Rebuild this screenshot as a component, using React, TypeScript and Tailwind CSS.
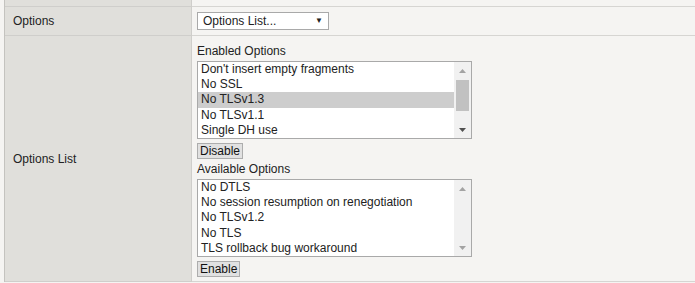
import React from 'react';

const enabledOptions = [
  "Don't insert empty fragments",
  'No SSL',
  'No TLSv1.3',
  'No TLSv1.1',
  'Single DH use',
];

const availableOptions = [
  'No DTLS',
  'No session resumption on renegotiation',
  'No TLSv1.2',
  'No TLS',
  'TLS rollback bug workaround',
];

const Arrow = ({ up, dark }: { up?: boolean; dark?: boolean }) => (
  <svg width="7" height="4" viewBox="0 0 7 4" className="block">
    <path d={up ? 'M0 4 L3.5 0 L7 4 Z' : 'M0 0 L3.5 4 L7 0 Z'} fill={dark ? '#505050' : '#a3a3a3'} />
  </svg>
);

const ListBox = ({ items, selected, thumb }: { items: string[]; selected?: number; thumb?: boolean }) => (
  <div className="flex w-[275px] h-[78px] border border-[#a9a9a9] bg-white">
    <div className="flex-1">
      {items.map((item, i) => (
        <div
          key={item}
          className={`h-[15.2px] leading-[15px] pl-[3px] whitespace-nowrap ${i === selected ? 'bg-[#cdcdcd]' : ''}`}
        >
          {item}
        </div>
      ))}
    </div>
    <div className="w-[17px] bg-[#f1f1f1] flex flex-col items-center">
      <div className="h-[17px] flex items-center justify-center">
        <Arrow up />
      </div>
      <div className="flex-1 w-full px-[2px]">
        {thumb && <div className="mt-px h-[31px] bg-[#c1c1c1]" />}
      </div>
      <div className="h-[17px] flex items-center justify-center">
        <Arrow dark={thumb} />
      </div>
    </div>
  </div>
);

const Button = ({ label }: { label: string }) => (
  <button className="block h-[16px] leading-[14px] px-[2px] bg-[#e1e1e1] border border-[#adadad] text-[12px] text-[#111]">
    {label}
  </button>
);

export default function App() {
  return (
    <div className="w-[695px] h-[283px] bg-[#f5f4f2] text-[12px] text-[#222] font-['Liberation_Sans',Arial,sans-serif]">
      <div className="ml-[4px] border-l border-[#c4c3bf] grid grid-cols-[187px_1fr]">
        {/* top strip */}
        <div className="h-[7px] bg-[#e0dfdb] border-b border-r border-[#cfcecb]" />
        <div className="h-[7px] border-b border-[#d6d5d2]" />

        {/* Options row */}
        <div className="h-[29px] bg-[#e0dfdb] border-b border-r border-[#cfcecb] flex items-center pl-[8px]">
          Options
        </div>
        <div className="h-[29px] border-b border-[#d6d5d2] pl-[5px] pt-[5px]">
          <div className="w-[132px] h-[18px] bg-white border border-[#a9a9a9] flex items-center justify-between pl-[5px] pr-[5px]">
            <span className="leading-[16px]">Options List...</span>
            <span className="text-[8px] leading-[16px]">▼</span>
          </div>
        </div>

        {/* Options List row */}
        <div className="h-[246px] bg-[#e0dfdb] border-b border-r border-[#cfcecb] flex items-center pl-[8px]">
          Options List
        </div>
        <div className="h-[246px] border-b border-[#d6d5d2] pl-[5px] pt-[8px] flex flex-col items-start">
          <div className="h-[15px] leading-[15px]">Enabled Options</div>
          <div className="mt-[2px]">
            <ListBox items={enabledOptions} selected={2} thumb />
          </div>
          <div className="mt-[4px]">
            <Button label="Disable" />
          </div>
          <div className="mt-[3px] h-[15px] leading-[15px]">Available Options</div>
          <div className="mt-[2px]">
            <ListBox items={availableOptions} />
          </div>
          <div className="mt-[4px]">
            <Button label="Enable" />
          </div>
        </div>
      </div>
    </div>
  );
}
